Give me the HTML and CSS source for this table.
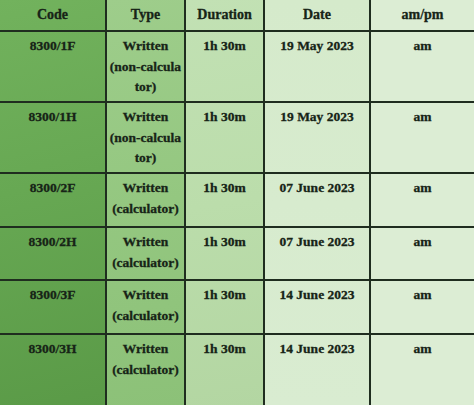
FILE: index.html
```html
<!DOCTYPE html>
<html lang="en">
<head>
<meta charset="utf-8">
<title>Exam timetable</title>
<link rel="stylesheet" href="styles.css">
</head>
<body>
<div class="table">
  <div class="cell head">Code</div>
  <div class="cell head">Type</div>
  <div class="cell head">Duration</div>
  <div class="cell head">Date</div>
  <div class="cell head last">am/pm</div>

  <div class="cell r3">8300/1F</div>
  <div class="cell r3">Written<br>(non-calcula<br>tor)</div>
  <div class="cell r3">1h 30m</div>
  <div class="cell r3">19 May 2023</div>
  <div class="cell r3 last">am</div>

  <div class="cell r3">8300/1H</div>
  <div class="cell r3">Written<br>(non-calcula<br>tor)</div>
  <div class="cell r3">1h 30m</div>
  <div class="cell r3">19 May 2023</div>
  <div class="cell r3 last">am</div>

  <div class="cell r2">8300/2F</div>
  <div class="cell r2">Written<br>(calculator)</div>
  <div class="cell r2">1h 30m</div>
  <div class="cell r2">07 June 2023</div>
  <div class="cell r2 last">am</div>

  <div class="cell r2b">8300/2H</div>
  <div class="cell r2b">Written<br>(calculator)</div>
  <div class="cell r2b">1h 30m</div>
  <div class="cell r2b">07 June 2023</div>
  <div class="cell r2b last">am</div>

  <div class="cell r2">8300/3F</div>
  <div class="cell r2">Written<br>(calculator)</div>
  <div class="cell r2">1h 30m</div>
  <div class="cell r2">14 June 2023</div>
  <div class="cell r2 last">am</div>

  <div class="cell r3 end">8300/3H</div>
  <div class="cell r3 end">Written<br>(calculator)</div>
  <div class="cell r3 end">1h 30m</div>
  <div class="cell r3 end">14 June 2023</div>
  <div class="cell r3 end last">am</div>
</div>
</body>
</html>
```
FILE: styles.css
```css
html, body {
  margin: 0;
  padding: 0;
  width: 474px;
  height: 405px;
  overflow: hidden;
}

.table {
  display: grid;
  grid-template-columns: 107px 79px 79px 106px 103px;
  width: 474px;
  font-family: "Liberation Serif", "Times New Roman", serif;
  font-weight: bold;
  font-size: 13.5px;
  line-height: 20.5px;
  color: #172417;
  -webkit-text-stroke: 0.3px #172417;
  text-align: center;
  background:
    linear-gradient(165deg, #72b25d 0%, #67a853 45%, #5a9a47 100%) 0 0 / 107px 100% no-repeat,
    linear-gradient(170deg, #9ecd8b 0%, #94c780 50%, #8cc178 100%) 107px 0 / 79px 100% no-repeat,
    linear-gradient(170deg, #c2e1b4 0%, #bbddab 50%, #b3d6a2 100%) 186px 0 / 79px 100% no-repeat,
    linear-gradient(180deg, #d5eacb 0%, #d9ecd1 100%) 265px 0 / 106px 100% no-repeat,
    linear-gradient(180deg, #dcedd4 0%, #dcedd4 100%) 371px 0 / 103px 100% no-repeat;
}

.cell {
  box-sizing: border-box;
  border-right: 2px solid #1f2d1f;
  border-bottom: 2px solid #1f2d1f;
  padding: 4px 2px 0;
  white-space: nowrap;
}

.cell.last {
  border-right: none;
}

.cell.head {
  height: 32px;
  padding-top: 5px;
  font-size: 14px;
}

.cell.r3 {
  height: 71px;
}

.cell.r2 {
  height: 54px;
}

.cell.r2b {
  height: 53px;
}

.cell.end {
  border-bottom: none;
}
```
